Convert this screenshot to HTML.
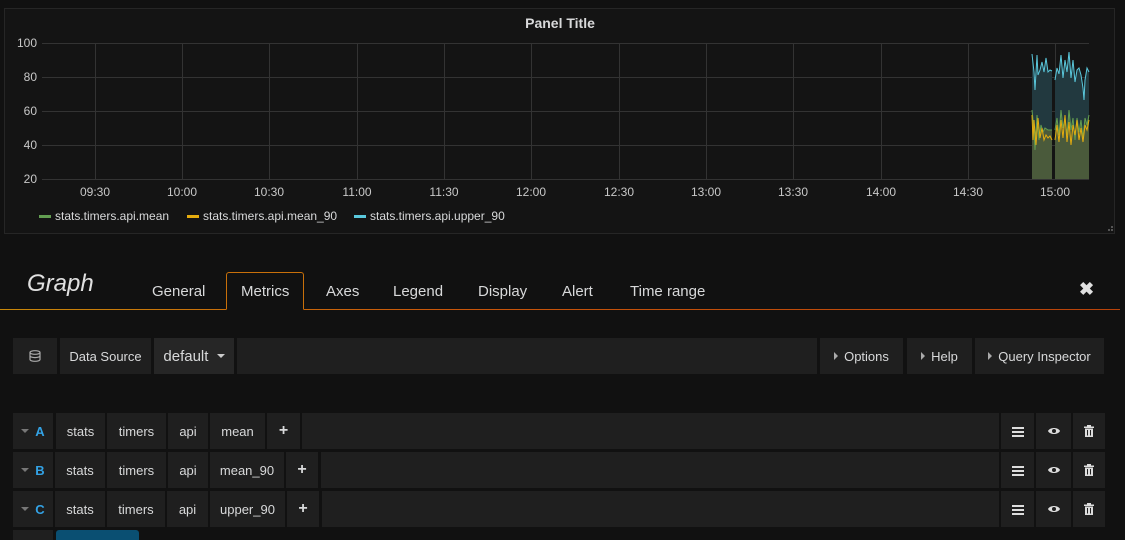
<!DOCTYPE html>
<html><head><meta charset="utf-8"><style>
*{margin:0;padding:0;box-sizing:border-box}
body{width:1125px;height:540px;background:#111;font-family:"Liberation Sans",sans-serif;color:#d8d9da;position:relative;overflow:hidden}
.a{position:absolute}
.panel{left:4px;top:8px;width:1111px;height:226px;background:#141414;border:1px solid #262626}
.b{position:absolute;background:#1f1f1f;font-size:13px;color:#d8d9da;display:flex;align-items:center;justify-content:center;height:36px}
.tab{position:absolute;top:283px;font-size:15px;color:#d8d9da}
.lbl{position:absolute;font-size:12px;color:#c8c8c8}
.caret{display:inline-block;width:0;height:0;border-left:4px solid #aaa;border-top:4px solid transparent;border-bottom:4px solid transparent;margin-right:6px}
.letter{color:#33a2e5;font-weight:bold;font-size:13px}
.dn{display:inline-block;width:0;height:0;border-top:4px solid #777;border-left:4px solid transparent;border-right:4px solid transparent;margin-right:6px}
</style></head><body>
<div class="a panel"></div>
<div class="a" style="left:0;top:15px;width:1120px;text-align:center;font-size:14px;font-weight:bold;color:#d8d9da">Panel Title</div>
<svg class="a" style="left:0;top:0" width="1125" height="240">
<g stroke="#333" stroke-width="1">
<line x1="42" y1="43.5" x2="1089" y2="43.5"/><line x1="42" y1="77.5" x2="1089" y2="77.5"/><line x1="42" y1="111.5" x2="1089" y2="111.5"/><line x1="42" y1="145.5" x2="1089" y2="145.5"/><line x1="42" y1="179.5" x2="1089" y2="179.5"/>
<line x1="95.5" y1="43" x2="95.5" y2="179"/><line x1="182.5" y1="43" x2="182.5" y2="179"/><line x1="269.5" y1="43" x2="269.5" y2="179"/><line x1="357.5" y1="43" x2="357.5" y2="179"/><line x1="444.5" y1="43" x2="444.5" y2="179"/><line x1="531.5" y1="43" x2="531.5" y2="179"/><line x1="619.5" y1="43" x2="619.5" y2="179"/><line x1="706.5" y1="43" x2="706.5" y2="179"/><line x1="793.5" y1="43" x2="793.5" y2="179"/><line x1="881.5" y1="43" x2="881.5" y2="179"/><line x1="968.5" y1="43" x2="968.5" y2="179"/><line x1="1055.5" y1="43" x2="1055.5" y2="179"/>
</g>
<polygon fill="#22393f" points="1032,179 1032,54 1034,72 1035,90 1037,55 1038,75 1040,70 1042,62 1044,72 1046,58 1048,72 1050,70 1052,71 1052,179"/>
<polygon fill="#22393f" points="1055,179 1055,80 1057,68 1059,74 1061,55 1063,78 1065,60 1067,72 1069,52 1071,78 1073,60 1075,82 1077,70 1079,68 1081,75 1083,88 1084,100 1085,80 1087,68 1089,72 1089,179"/>
<polygon fill="#4a5a3b" points="1032,179 1032,110 1034,130 1035,150 1037,115 1039,140 1041,125 1043,132 1045,128 1048,130 1050,130 1052,130 1052,179"/>
<polygon fill="#4a5a3b" points="1055,179 1055,130 1057,118 1059,135 1061,110 1063,128 1065,118 1067,135 1069,110 1071,130 1073,118 1075,140 1077,118 1079,132 1081,120 1083,138 1085,118 1087,125 1089,115 1089,179"/>
<polyline fill="none" stroke="#5ac8dc" stroke-width="1" points="1032,54 1034,72 1035,90 1037,55 1038,75 1040,70 1042,62 1044,72 1046,58 1048,72 1050,70 1052,71"/>
<polyline fill="none" stroke="#5ac8dc" stroke-width="1" points="1055,80 1057,68 1059,74 1061,55 1063,78 1065,60 1067,72 1069,52 1071,78 1073,60 1075,82 1077,70 1079,68 1081,75 1083,88 1084,100 1085,80 1087,68 1089,72"/>
<polyline fill="none" stroke="#629e51" stroke-width="1" points="1032,110 1034,130 1035,150 1037,115 1039,140 1041,125 1043,132 1045,128 1048,130 1050,130 1052,130"/>
<polyline fill="none" stroke="#629e51" stroke-width="1" points="1055,130 1057,118 1059,135 1061,110 1063,128 1065,118 1067,135 1069,110 1071,130 1073,118 1075,140 1077,118 1079,132 1081,120 1083,138 1085,118 1087,125 1089,115"/>
<polyline fill="none" stroke="#e5ac0e" stroke-width="1" points="1032,115 1033,140 1034,120 1036,145 1038,118 1040,138 1042,128 1044,140 1046,135 1048,138 1050,136 1052,140"/>
<polyline fill="none" stroke="#e5ac0e" stroke-width="1" points="1055,140 1057,125 1059,142 1061,120 1063,138 1065,115 1067,142 1069,122 1071,145 1073,125 1075,135 1077,120 1079,140 1081,128 1083,142 1085,125 1087,130 1089,120"/>
<g font-family="Liberation Sans" font-size="12" fill="#c8c8c8">
<text x="37" y="47" text-anchor="end">100</text><text x="37" y="81" text-anchor="end">80</text><text x="37" y="115" text-anchor="end">60</text><text x="37" y="149" text-anchor="end">40</text><text x="37" y="183" text-anchor="end">20</text>
<g text-anchor="middle"><text x="95" y="196">09:30</text><text x="182" y="196">10:00</text><text x="269" y="196">10:30</text><text x="357" y="196">11:00</text><text x="444" y="196">11:30</text><text x="531" y="196">12:00</text><text x="619" y="196">12:30</text><text x="706" y="196">13:00</text><text x="793" y="196">13:30</text><text x="881" y="196">14:00</text><text x="968" y="196">14:30</text><text x="1055" y="196">15:00</text></g>
</g>
<rect x="39" y="215" width="12" height="3" fill="#629e51"/><rect x="187" y="215" width="12" height="3" fill="#e5ac0e"/><rect x="354" y="215" width="12" height="3" fill="#5ac8dc"/>
<g font-family="Liberation Sans" font-size="12" fill="#d8d9da"><text x="55" y="220">stats.timers.api.mean</text><text x="203" y="220">stats.timers.api.mean_90</text><text x="370" y="220">stats.timers.api.upper_90</text></g>
<g fill="#555"><rect x="1111" y="229" width="2" height="2"/><rect x="1108" y="229" width="2" height="2"/><rect x="1111" y="226" width="2" height="2"/></g>
</svg>

<div class="a" style="left:0;top:309px;width:1120px;height:1px;background:linear-gradient(90deg,#c8880a,#c8560a 40%,#b8430a)"></div>
<div class="a" style="left:27px;top:270px;font-size:24px;font-style:italic;color:#e0e0e0">Graph</div>
<div class="a" style="left:226px;top:272px;width:78px;height:38px;border:1px solid #c8700a;border-bottom:1px solid #111;border-radius:3px 3px 0 0;background:#111"></div>
<div class="tab" style="left:152px">General</div>
<div class="tab" style="left:241px">Metrics</div>
<div class="tab" style="left:326px">Axes</div>
<div class="tab" style="left:393px">Legend</div>
<div class="tab" style="left:478px">Display</div>
<div class="tab" style="left:562px">Alert</div>
<div class="tab" style="left:630px">Time range</div>
<div class="a" style="left:1079px;top:279px;font-size:18px;font-weight:bold;color:#e0e0e0">✖</div>

<div class="b" style="left:13px;top:338px;width:44px"><svg width="12" height="12" viewBox="0 0 12 12"><g fill="none" stroke="#aaa" stroke-width="1.2"><ellipse cx="6" cy="2.5" rx="5" ry="1.8"/><path d="M1 2.5v7c0 1 2.2 1.8 5 1.8s5-.8 5-1.8v-7M1 5.8c0 1 2.2 1.8 5 1.8s5-.8 5-1.8"/></g></svg></div>
<div class="b" style="left:60px;top:338px;width:91px">Data Source</div>
<div class="b" style="left:154px;top:338px;width:80px;background:#262626;font-size:15px">default&nbsp;<span style="display:inline-block;border-top:4px solid #ccc;border-left:4px solid transparent;border-right:4px solid transparent;margin-left:4px"></span></div>
<div class="b" style="left:237px;top:338px;width:580px"></div>
<div class="b" style="left:820px;top:338px;width:83px"><span class="caret"></span>Options</div>
<div class="b" style="left:907px;top:338px;width:65px"><span class="caret"></span>Help</div>
<div class="b" style="left:975px;top:338px;width:129px"><span class="caret"></span>Query Inspector</div>

<!-- Row A -->
<div class="b" style="left:13px;top:413px;width:40px"><span class="dn"></span><span class="letter">A</span></div>
<div class="b" style="left:56px;top:413px;width:49px">stats</div>
<div class="b" style="left:107px;top:413px;width:59px">timers</div>
<div class="b" style="left:168px;top:413px;width:40px">api</div>
<div class="b" style="left:210px;top:413px;width:55px">mean</div>
<div class="b" style="left:267px;top:413px;width:33px;font-size:16px;font-weight:bold">+</div>
<div class="b" style="left:302px;top:413px;width:697px"></div>
<!-- Row B -->
<div class="b" style="left:13px;top:452px;width:40px"><span class="dn"></span><span class="letter">B</span></div>
<div class="b" style="left:55px;top:452px;width:50px">stats</div>
<div class="b" style="left:107px;top:452px;width:59px">timers</div>
<div class="b" style="left:168px;top:452px;width:40px">api</div>
<div class="b" style="left:210px;top:452px;width:74px">mean_90</div>
<div class="b" style="left:286px;top:452px;width:32px;font-size:16px;font-weight:bold">+</div>
<div class="b" style="left:321px;top:452px;width:678px"></div>
<!-- Row C -->
<div class="b" style="left:13px;top:491px;width:40px"><span class="dn"></span><span class="letter">C</span></div>
<div class="b" style="left:55px;top:491px;width:50px">stats</div>
<div class="b" style="left:107px;top:491px;width:58px">timers</div>
<div class="b" style="left:167px;top:491px;width:41px">api</div>
<div class="b" style="left:210px;top:491px;width:75px">upper_90</div>
<div class="b" style="left:287px;top:491px;width:32px;font-size:16px;font-weight:bold">+</div>
<div class="b" style="left:322px;top:491px;width:677px"></div>

<!-- right icons -->
<div class="b" style="left:1001px;top:413px;width:33px"><svg width="12" height="11"><g fill="#ddd"><rect y="1" width="12" height="2"/><rect y="5" width="12" height="2"/><rect y="9" width="12" height="2"/></g></svg></div>
<div class="b" style="left:1036px;top:413px;width:35px"><svg width="12" height="8" viewBox="0 0 12 8"><path d="M0 4C2 0 10 0 12 4C10 8 2 8 0 4Z" fill="#ddd"/><circle cx="6" cy="4" r="2" fill="#1f1f1f"/></svg></div>
<div class="b" style="left:1073px;top:413px;width:32px"><svg width="10" height="12" viewBox="0 0 10 12"><g fill="#ddd"><rect x="0" y="1.5" width="10" height="1.5"/><rect x="3" y="0" width="4" height="2"/><path d="M1 3.5h8v8.5H1zM3 5v5.5h1V5zm3 0v5.5h1V5z"/></g></svg></div>
<div class="b" style="left:1001px;top:452px;width:33px"><svg width="12" height="11"><g fill="#ddd"><rect y="1" width="12" height="2"/><rect y="5" width="12" height="2"/><rect y="9" width="12" height="2"/></g></svg></div>
<div class="b" style="left:1036px;top:452px;width:35px"><svg width="12" height="8" viewBox="0 0 12 8"><path d="M0 4C2 0 10 0 12 4C10 8 2 8 0 4Z" fill="#ddd"/><circle cx="6" cy="4" r="2" fill="#1f1f1f"/></svg></div>
<div class="b" style="left:1073px;top:452px;width:32px"><svg width="10" height="12" viewBox="0 0 10 12"><g fill="#ddd"><rect x="0" y="1.5" width="10" height="1.5"/><rect x="3" y="0" width="4" height="2"/><path d="M1 3.5h8v8.5H1zM3 5v5.5h1V5zm3 0v5.5h1V5z"/></g></svg></div>
<div class="b" style="left:1001px;top:491px;width:33px"><svg width="12" height="11"><g fill="#ddd"><rect y="1" width="12" height="2"/><rect y="5" width="12" height="2"/><rect y="9" width="12" height="2"/></g></svg></div>
<div class="b" style="left:1036px;top:491px;width:35px"><svg width="12" height="8" viewBox="0 0 12 8"><path d="M0 4C2 0 10 0 12 4C10 8 2 8 0 4Z" fill="#ddd"/><circle cx="6" cy="4" r="2" fill="#1f1f1f"/></svg></div>
<div class="b" style="left:1073px;top:491px;width:32px"><svg width="10" height="12" viewBox="0 0 10 12"><g fill="#ddd"><rect x="0" y="1.5" width="10" height="1.5"/><rect x="3" y="0" width="4" height="2"/><path d="M1 3.5h8v8.5H1zM3 5v5.5h1V5zm3 0v5.5h1V5z"/></g></svg></div>

<div class="a" style="left:13px;top:530px;width:40px;height:10px;background:#1f1f1f"></div>
<div class="a" style="left:56px;top:530px;width:83px;height:10px;background:#0a4f72;border-radius:3px 3px 0 0"></div>
</body></html>
